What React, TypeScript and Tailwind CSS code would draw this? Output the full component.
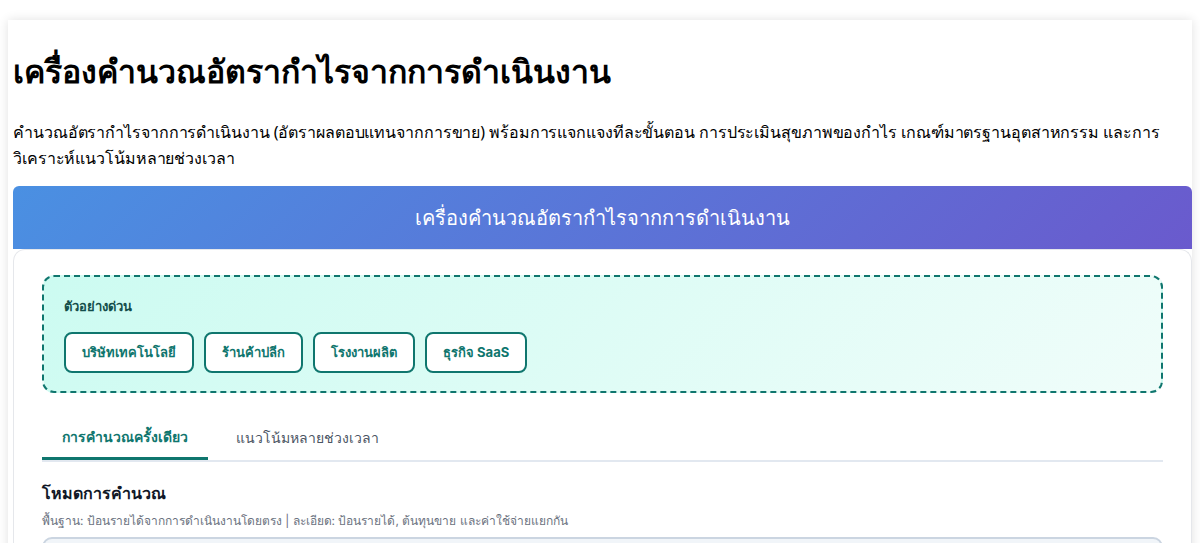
import React from "react";

export default function App() {
  return (
    <div className="min-h-[543px] bg-white pt-5 px-2">
      <div className="bg-white shadow-[0_0_10px_rgba(0,0,0,0.12)] pl-[5px] pb-10">
        <h1 className="pt-[27px] text-[32px] leading-[48px] font-bold text-black">
          เครื่องคำนวณอัตรากำไรจากการดำเนินงาน
        </h1>
        <p className="mt-[24px] text-[16px] leading-[26px] text-black tracking-[-0.1px]">
          คำนวณอัตรากำไรจากการดำเนินงาน (อัตราผลตอบแทนจากการขาย) พร้อมการแจกแจงทีละขั้นตอน การประเมินสุขภาพของกำไร เกณฑ์มาตรฐานอุตสาหกรรม และการวิเคราะห์แนวโน้มหลายช่วงเวลา
        </p>
        <div className="mt-[15px] h-[63px] rounded-t-[6px] bg-[linear-gradient(135deg,#4a90e2_0%,#6a5acd_100%)] flex items-center justify-center">
          <span className="text-white text-[20px] font-[Inter,'Noto_Sans',sans-serif]">เครื่องคำนวณอัตรากำไรจากการดำเนินงาน</span>
        </div>
        <div className="rounded-t-[12px] border border-[#e5e7eb] border-b-0 px-[28px] pt-[25px] font-[Inter,'Noto_Sans',sans-serif]">
          <div className="rounded-[12px] border-2 border-dashed border-[#0f766e] bg-[linear-gradient(135deg,#ccfbf1_0%,#f0fdfa_100%)] px-[20px] pt-[19px] pb-[18px]">
            <div className="text-[13px] font-semibold text-[#134e4a] leading-[20px]">ตัวอย่างด่วน</div>
            <div className="mt-[16px] flex gap-[10px]">
              {["บริษัทเทคโนโลยี", "ร้านค้าปลีก", "โรงงานผลิต", "ธุรกิจ SaaS"].map((t) => (
                <button key={t} className="h-[41px] px-[16px] rounded-[8px] border-2 border-[#0f766e] bg-white text-[13px] font-bold text-[#0f766e]">
                  {t}
                </button>
              ))}
            </div>
          </div>
          <div className="mt-[22px] flex border-b-2 border-[#e2e8f0]">
            <div className="w-[166px] h-[45px] flex items-center justify-center text-[14px] font-semibold text-[#0f766e] border-b-[3px] border-[#0f766e] -mb-[2px]">
              การคำนวณครั้งเดียว
            </div>
            <div className="px-[28px] h-[45px] flex items-center text-[14px] font-medium text-[#4b5563]">
              แนวโน้มหลายช่วงเวลา
            </div>
          </div>
          <div className="mt-[19px] text-[16px] font-bold text-[#111827] leading-[24px]">โหมดการคำนวณ</div>
          <div className="mt-[7px] text-[12px] text-[#6b7280] leading-[18px]">
            พื้นฐาน: ป้อนรายได้จากการดำเนินงานโดยตรง | ละเอียด: ป้อนรายได้, ต้นทุนขาย และค่าใช้จ่ายแยกกัน
          </div>
          <div className="mt-[7px] h-[60px] rounded-[10px] border-2 border-[#cbd5e1] bg-[#f1f5f9]"></div>
        </div>
      </div>
    </div>
  );
}
